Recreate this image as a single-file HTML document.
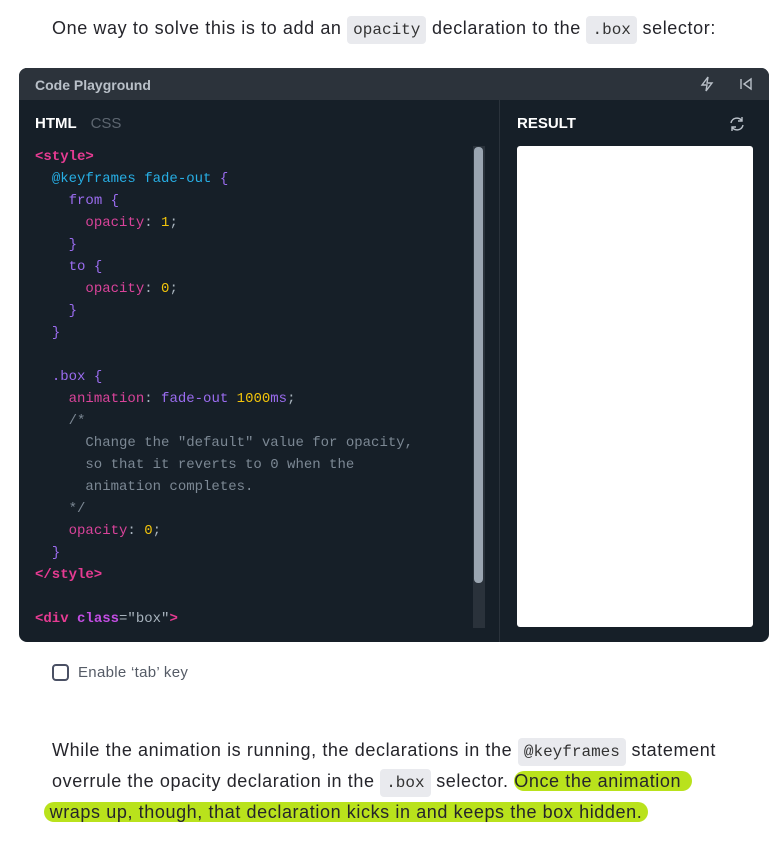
<!DOCTYPE html>
<html><head><style>
*{margin:0;padding:0;box-sizing:border-box}
body{width:778px;height:849px;background:#fff;position:relative;font-family:"Liberation Sans",sans-serif;color:#222;overflow:hidden}
.p{position:absolute;left:52px;font-size:18px;letter-spacing:0.6px;white-space:nowrap;color:#25252b}
code{font-family:"Liberation Mono",monospace;background:#e9eaee;border-radius:4px;padding:5px 6px;font-size:16px;letter-spacing:0;color:#333}
.panel{position:absolute;left:19px;top:68px;width:750px;height:574px;background:#161f28;border-radius:8px;overflow:hidden}
.hd{height:32px;background:#2c333b;color:#b9c0c8;font-weight:bold;font-size:14px;padding:9px 0 0 16px}
.code{position:absolute;left:16px;top:78px;font-family:"Liberation Mono",monospace;font-size:14px;line-height:22px;white-space:pre;color:#a8b3bd}
.t{color:#e63b92;font-weight:bold}.k{color:#27aee4}.b{color:#9b6cf0}.pr{color:#d9439a}.n{color:#f2c40b}.c{color:#7c8894}.a{color:#c34de3;font-weight:bold}
.hl{background:#b9e21c;border-radius:10px}
</style></head><body>
<div class="p" style="top:18px">One way to solve this is to add an <code>opacity</code> declaration to the <code>.box</code> selector:</div>
<div class="panel">
<div class="hd">Code Playground</div>
<svg style="position:absolute;left:680px;top:8px" width="16" height="16" viewBox="0 0 16 16" fill="none" stroke="#b9c0c8" stroke-width="1.4"><path d="M9 1 3 9h5l-1 6 6-8H8z"/></svg>
<svg style="position:absolute;left:720px;top:9px" width="14" height="14" viewBox="0 0 14 14" fill="none" stroke="#b9c0c8" stroke-width="1.4"><path d="M2 2v10M12 2 5 7l7 5z"/></svg>
<div style="position:absolute;left:16px;top:47px;color:#fff;font-weight:bold;font-size:15px">HTML <span style="color:#5d6670;font-weight:normal;margin-left:10px">CSS</span></div>
<div class="code"><span class="t">&lt;style&gt;</span>
  <span class="k">@keyframes fade-out</span> <span class="b">{</span>
    <span class="b">from {</span>
      <span class="pr">opacity</span>: <span class="n">1</span>;
    <span class="b">}</span>
    <span class="b">to {</span>
      <span class="pr">opacity</span>: <span class="n">0</span>;
    <span class="b">}</span>
  <span class="b">}</span>

  <span class="b">.box {</span>
    <span class="pr">animation</span>: <span class="b">fade-out</span> <span class="n">1000</span><span class="b">ms</span>;
    <span class="c">/*</span>
<span class="c">      Change the "default" value for opacity,</span>
<span class="c">      so that it reverts to 0 when the</span>
<span class="c">      animation completes.</span>
<span class="c">    */</span>
    <span class="pr">opacity</span>: <span class="n">0</span>;
  <span class="b">}</span>
<span class="t">&lt;/style&gt;</span>

<span class="t">&lt;div</span> <span class="a">class</span>="box"<span class="t">&gt;</span></div>
<div style="position:absolute;left:454px;top:78px;width:12px;height:482px;background:#2a323b"></div>
<div style="position:absolute;left:455px;top:79px;width:9px;height:436px;background:#9aa5b1;border-radius:4px"></div>
<div style="position:absolute;left:480px;top:32px;width:1px;height:542px;background:#2a323b"></div>
<div style="position:absolute;left:498px;top:47px;color:#fff;font-weight:bold;font-size:15px">RESULT</div>
<svg style="position:absolute;left:709px;top:47px" width="18" height="18" viewBox="0 0 18 18" fill="none" stroke="#b9c0c8" stroke-width="1.4"><path d="M3 8a6 6 0 0 1 11-2M15 10a6 6 0 0 1-11 2M14 2v4h-4M4 16v-4h4"/></svg>
<div style="position:absolute;left:498px;top:78px;width:236px;height:481px;background:#fff;border-radius:3px"></div>
</div>
<div style="position:absolute;left:52px;top:664px;width:17px;height:17px;border:2px solid #4a5064;border-radius:4px"></div>
<div style="position:absolute;left:78px;top:664px;font-size:15px;letter-spacing:0.3px;color:#555b66">Enable ‘tab’ key</div>
<div class="p" style="top:740px">While the animation is running, the declarations in the <code>@keyframes</code> statement</div>
<div class="p" style="top:771px">overrule the opacity declaration in the <code>.box</code> selector. <span class="hl">Once the animation&nbsp;&nbsp;</span></div>
<div class="p" style="top:802px;left:44px"><span class="hl">&nbsp;wraps up, though, that declaration kicks in and keeps the box hidden.&nbsp;</span></div>
</body></html>
